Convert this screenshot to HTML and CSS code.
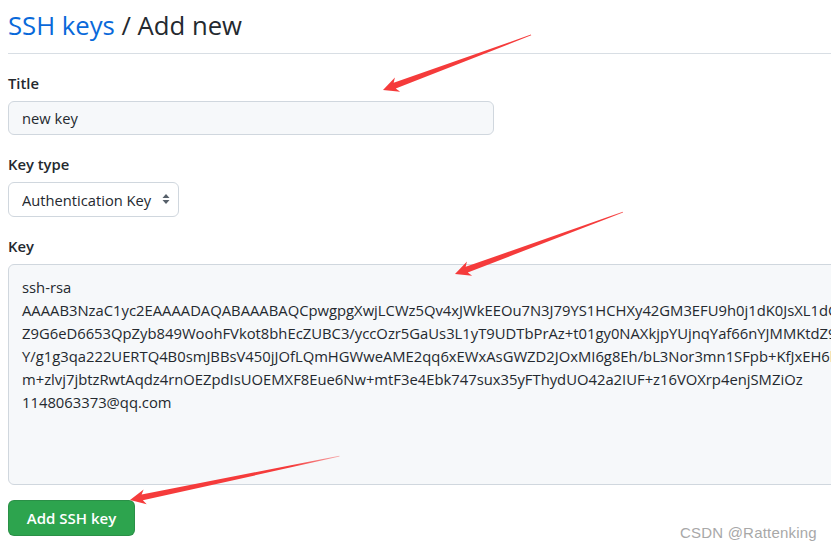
FILE: index.html
```html
<!DOCTYPE html>
<html lang="en">
<head>
<meta charset="utf-8">
<title>SSH keys / Add new</title>
<link rel="stylesheet" href="styles.css">
</head>
<body>
<div class="page">
  <div class="subhead">
    <h2 class="subhead-heading"><a class="crumb" href="#">SSH keys</a> / Add new</h2>
  </div>
  <form class="form">
    <div class="form-group">
      <label class="form-label" for="title">Title</label>
      <input class="form-input" id="title" type="text" value="new key">
    </div>
    <div class="form-group">
      <label class="form-label" for="type">Key type</label>
      <div class="select-wrap">
        <select class="form-select" id="type">
          <option>Authentication Key</option>
          <option>Signing Key</option>
        </select>
        <svg class="select-icon" width="8" height="12" viewBox="0 0 8 12"><path d="M4 1 L7.5 5 H0.5 Z M4 11 L0.5 7 H7.5 Z" fill="#57606a"/></svg>
      </div>
    </div>
    <div class="form-group">
      <label class="form-label" for="key">Key</label>
      <textarea class="form-textarea" id="key" wrap="off">ssh-rsa
AAAAB3NzaC1yc2EAAAADAQABAAABAQCpwgpgXwjLCWz5Qv4xJWkEEOu7N3J79YS1HCHXy42GM3EFU9h0j1dK0JsXL1dQ
Z9G6eD6653QpZyb849WoohFVkot8bhEcZUBC3/yccOzr5GaUs3L1yT9UDTbPrAz+t01gy0NAXkjpYUjnqYaf66nYJMMKtdZ9q
Y/g1g3qa222UERTQ4B0smJBBsV450jJOfLQmHGWweAME2qq6xEWxAsGWZD2JOxMI6g8Eh/bL3Nor3mn1SFpb+KfJxEH6k
m+zlvj7jbtzRwtAqdz4rnOEZpdIsUOEMXF8Eue6Nw+mtF3e4Ebk747sux35yFThydUO42a2IUF+z16VOXrp4enjSMZiOz
1148063373@qq.com</textarea>
    </div>
    <div class="form-actions">
      <button class="btn-primary" type="button">Add SSH key</button>
    </div>
  </form>
</div>

<svg class="annotations" width="831" height="551" viewBox="0 0 831 551">
  <defs>
    <linearGradient id="fade" gradientUnits="userSpaceOnUse" x1="0" y1="0" x2="220" y2="0">
      <stop offset="0" stop-color="#f53b3b"/>
      <stop offset="0.75" stop-color="#f53b3b"/>
      <stop offset="1" stop-color="#f53b3b" stop-opacity="0.35"/>
    </linearGradient>
  </defs>
  <polygon fill="url(#fade)" points="0,0 15.5,-7.5 12.5,-3 158,-0.4 158,0.4 12.5,3 15.5,7.5" transform="translate(383 90) rotate(-20.39)"/>
  <polygon fill="url(#fade)" points="0,0 15.5,-7.5 12.5,-3 179,-0.4 179,0.4 12.5,3 15.5,7.5" transform="translate(455 274) rotate(-20.26)"/>
  <polygon fill="url(#fade)" points="0,0 15.5,-7.5 12.5,-3 214,-0.4 214,0.4 12.5,3 15.5,7.5" transform="translate(130 500) rotate(-11.83)"/>
</svg>

<div class="watermark">CSDN @Rattenking</div>
</body>
</html>
```

FILE: styles.css
```css
html, body {
  margin: 0;
  padding: 0;
  overflow: hidden;
  background: #ffffff;
}

body {
  font-family: "Open Sans", "Noto Sans", sans-serif;
  color: #24292f;
  width: 831px;
  height: 551px;
  position: relative;
}

.page {
  padding: 0 0 0 8px;
}

.subhead {
  border-bottom: 1px solid #d8dee4;
  padding: 8px 0 9px 0;
}

.subhead-heading {
  margin: 0;
  font-size: 25.7px;
  font-weight: 400;
  line-height: 36px;
}

.crumb {
  color: #0969da;
  text-decoration: none;
}

.form {
  display: flex;
  flex-direction: column;
}

.form-group {
  display: flex;
  flex-direction: column;
  align-items: flex-start;
  margin-top: 17px;
}

.form-label {
  font-size: 14.8px;
  font-weight: 600;
  line-height: 24px;
  margin-bottom: 6px;
}

.form-input {
  box-sizing: border-box;
  width: 486px;
  height: 34px;
  padding: 0 13px;
  font-family: inherit;
  font-size: 14.7px;
  color: #24292f;
  background: #f6f8fa;
  border: 1px solid #d0d7de;
  border-radius: 6px;
  outline: none;
}

.select-wrap {
  position: relative;
}

.form-select {
  box-sizing: border-box;
  appearance: none;
  -webkit-appearance: none;
  width: 171px;
  height: 35px;
  padding: 0 4px 0 13px;
  font-family: inherit;
  font-size: 14.7px;
  color: #24292f;
  background: #ffffff;
  border: 1px solid #d0d7de;
  border-radius: 6px;
  outline: none;
}

.select-icon {
  position: absolute;
  left: 154px;
  top: 11px;
  pointer-events: none;
}

.form-textarea {
  box-sizing: border-box;
  width: 900px;
  height: 221px;
  padding: 11px 13px;
  font-family: inherit;
  font-size: 14.8px;
  line-height: 23px;
  color: #24292f;
  background: #f6f8fa;
  border: 1px solid #d0d7de;
  border-radius: 6px;
  resize: none;
  overflow: hidden;
  white-space: pre;
  outline: none;
}

.form-actions {
  margin-top: 15px;
}

.btn-primary {
  box-sizing: border-box;
  height: 36px;
  width: 127px;
  padding: 0;
  font-family: inherit;
  font-size: 15px;
  font-weight: 600;
  color: #ffffff;
  background: #2da44e;
  border: 1px solid rgba(27, 31, 36, 0.15);
  border-radius: 6px;
}

.annotations {
  position: absolute;
  left: 0;
  top: 0;
  pointer-events: none;
}

.watermark {
  position: absolute;
  left: 680px;
  top: 523px;
  font-family: "Liberation Sans", Arial, sans-serif;
  font-size: 15px;
  line-height: 20px;
  color: #a8a8a8;
  letter-spacing: 0.2px;
}
```
